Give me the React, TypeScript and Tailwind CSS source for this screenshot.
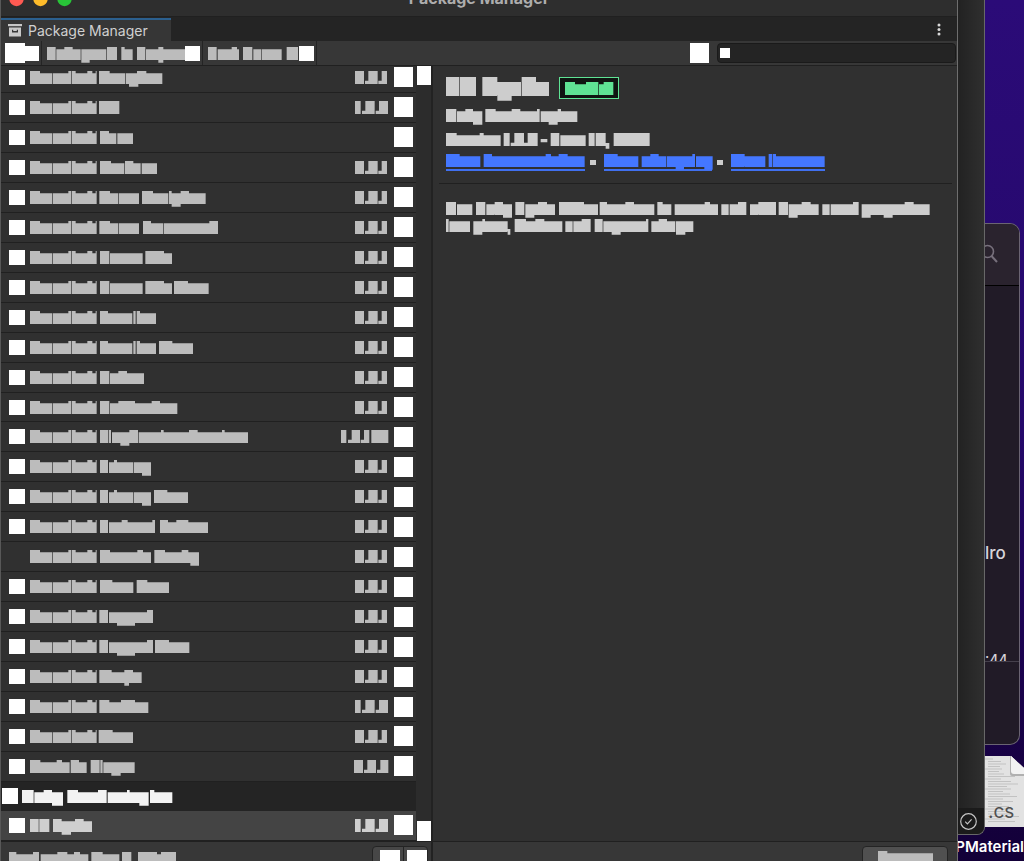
import clsx from "clsx";
import { useState } from "react";

type PackageRow = {
  id: string;
  label: string;
  version: string;
  expandable?: boolean;
};

const PREFIX = "a30x37s2x46a8s2a12x35a15x10a3";
const V_PATCH = "a27_3b10a28_2b10a16_3";
const V_MAJOR = "a17_4b10a28_3b10a27";
const V_LONG = "a16_5b11a25_2b10a16_6a51";
const V_LAST = "a27_3b10a26_3b10a24";

const packages: PackageRow[] = [
  { id: "p1", label: PREFIX + "_7a32x47s2x9d24D4a24x48", version: V_PATCH },
  { id: "p2", label: PREFIX + "_7a61", version: V_MAJOR },
  { id: "p3", label: PREFIX + "_10a27x22s3x47", version: "" },
  { id: "p4", label: PREFIX + "_10a33x40s2a25x22s3x46", version: V_PATCH },
  { id: "p5", label: PREFIX + "_8a32x25s2x60_9a33x46s2a8d27a25x50", version: V_PATCH },
  { id: "p6", label: PREFIX + "_8a32x25s2x60_12a24x37s2x136a26", version: V_PATCH },
  { id: "p7", label: PREFIX + "_10a28s2x98_8a56x24", version: V_PATCH },
  { id: "p8", label: PREFIX + "_10a28s2x98_8a56x24_6a42x62", version: V_PATCH },
  { id: "p9", label: PREFIX + "_10a24x73s3a7s3a10x48", version: V_PATCH },
  { id: "p10", label: PREFIX + "_10a24x73s3a7s3a10x48_9a40x62", version: V_PATCH },
  { id: "p11", label: PREFIX + "_10a28s2x25a26x51", version: V_PATCH },
  { id: "p12", label: PREFIX + "_10a28s2x25a50x50a25x52", version: V_PATCH },
  { id: "p13", label: PREFIX + "_10a24s2a7s3x25d27a26s2x67a8x76a26x73a8x70", version: V_LONG },
  { id: "p14", label: PREFIX + "_10a24s3x15a9x49s2x24d27", version: V_PATCH },
  { id: "p15", label: PREFIX + "_10a24s3x15a9x49s2x24d27_9a40x62", version: V_PATCH },
  { id: "p16", label: PREFIX + "_10a24s3x38a18x74a8_15a24x25a36x59", version: V_PATCH },
  { id: "p17", label: PREFIX + "_10a30x82a17x24_10a32x50a20x6d26", version: V_PATCH, expandable: false },
  { id: "p18", label: PREFIX + "_10a37x63_10a32x65", version: V_PATCH },
  { id: "p19", label: PREFIX + "_8a26s3x24d54x36a18", version: V_PATCH },
  { id: "p20", label: PREFIX + "_8a26s3x24d54x36a18_6a42x61", version: V_PATCH },
  { id: "p21", label: PREFIX + "_8a37x38D14a12x26", version: V_PATCH },
  { id: "p22", label: PREFIX + "_8a30x35a42x40", version: V_MAJOR },
  { id: "p23", label: PREFIX + "_6a42x61", version: V_PATCH },
  { id: "p24", label: "a31x49a16x23s3a25x23_12a27s2a7s2x24d28x42", version: V_LAST },
];

const selectedPackage: PackageRow = {
  id: "sprite",
  label: "a26s2a30_11a26d28x12a26x25",
  version: V_MAJOR,
};

const links = [
  { name: "View documentation", code: "a41x62_10a25x161a16x23a27x51" },
  { name: "View changelog", code: "a41x62_10x26a25x22s2x27d25x25a8s3x25d25" },
  { name: "View licenses", code: "a41x62_10a10s2a10x146" },
];

// Each letter is a block kind followed by its width in thirds of a pixel:
// a = tall, x = low, d = low with a tail, D = tall with a tail, b = dot,
// c = comma, m = dash, s = seam, _ = gap.
function Blocks({ code, big = false }: { code: string; big?: boolean }) {
  const low = big ? 15 : 7;
  const base = big ? 57 : 39;
  const tail = big ? 71 : 47;
  const spans: Record<string, [number, number]> = {
    a: [0, base],
    x: [low, base],
    d: [low, tail],
    D: [0, tail],
    b: [29, base],
    c: [30, tail],
    m: [18, 28],
  };
  let x = 0;
  let path = "";
  for (const [, kind, size] of code.matchAll(/([a-zA-Z_])(\d+)/g)) {
    const width = Number(size);
    const span = spans[kind];
    if (span) {
      path += `M${x} ${span[0]}h${width}V${span[1]}h${-width}z`;
    }
    x += width;
  }
  return (
    <svg
      width={x / 3}
      height={base / 3}
      viewBox={`0 0 ${x} ${base}`}
      className="block shrink-0 overflow-visible fill-current"
      aria-hidden="true"
    >
      <path d={path} />
    </svg>
  );
}

function Row({
  row,
  selected,
  first,
  onSelect,
}: {
  row: PackageRow;
  selected: boolean;
  first?: boolean;
  onSelect: () => void;
}) {
  return (
    <li
      className={clsx(
        "flex min-h-0 border-b border-[#202020]",
        first ? "h-[27px] shrink-0 pb-1" : "flex-1",
        selected ? "bg-[#444444] text-[#cfcfcf]" : "text-[#bcbcbc]"
      )}
    >
      <button
        type="button"
        aria-label={row.id}
        onClick={onSelect}
        className="flex w-full items-center pl-2 pr-[3px]"
      >
        <span
          className={clsx(
            "mr-[5px] h-[15px] w-4 shrink-0",
            row.expandable !== false && "bg-white"
          )}
        />
        <Blocks code={row.label} />
        <span className="ml-auto mr-1.5">
          <Blocks code={row.version} />
        </span>
        <span className="h-5 w-[19px] shrink-0 bg-white" />
      </button>
    </li>
  );
}

function TitleBar() {
  return (
    <div className="relative flex h-4 shrink-0 items-end justify-center overflow-hidden bg-[#2e2e2e]">
      <svg className="absolute left-0 top-0" width="80" height="8" viewBox="0 0 80 8" aria-hidden="true">
        <circle cx="15.5" cy="-1" r="7.2" fill="#ff5a52" />
        <circle cx="39.5" cy="-1" r="7.2" fill="#febb2a" />
        <circle cx="63.5" cy="-1" r="7.2" fill="#28c438" />
      </svg>
      <h1 className="pb-2 text-base font-bold leading-5 text-[#adadad]">
        Package Manager
      </h1>
    </div>
  );
}

function TabStrip() {
  return (
    <div className="flex h-[25px] shrink-0 items-end justify-between border-t border-[#202020] bg-[#242424]">
      <button
        type="button"
        className="flex h-[23px] w-[170px] items-center gap-1.5 border-t-2 border-[#2b5f8e] bg-[#363636] pl-[7px] text-sm leading-5 text-[#d0d0d0]"
      >
        <svg width="14" height="13" viewBox="0 0 14 13" fill="#c8c8c8" aria-hidden="true">
          <path d="M0 0h14v2.2H0z" />
          <path fillRule="evenodd" d="M1 3.4h12V12.4H1zM4 5.8v2.6h6V5.8H8.8v1.2H5.2V5.8z" />
        </svg>
        Package Manager
      </button>
      <button type="button" aria-label="More" className="mr-3 flex h-6 w-3 items-center justify-center">
        <svg width="4" height="13" viewBox="0 0 4 13" fill="#d8d8d8" aria-hidden="true">
          <circle cx="2" cy="1.9" r="1.5" />
          <circle cx="2" cy="6.5" r="1.5" />
          <circle cx="2" cy="11.1" r="1.5" />
        </svg>
      </button>
    </div>
  );
}

function Toolbar() {
  return (
    <div className="flex h-[25px] shrink-0 items-center border-b border-[#202020] bg-[#373737] text-[#bcbcbc]">
      <button type="button" aria-label="Add" className="flex h-full w-[41px] items-center border-r border-[#242424] pl-1">
        <span className="h-5 w-5 bg-white" />
        <span className="h-[15px] w-3.5 bg-white" />
      </button>
      <button type="button" aria-label="Packages" className="flex h-full w-[161px] items-center border-r border-[#242424] pl-[5px]">
        <Blocks code="a26s2x24a25x24s2d25x50s2a30_13a10x24_13a25s2x37D15x66" />
        <span className="h-[15px] w-[15px] bg-white" />
      </button>
      <button type="button" aria-label="Sort" className="flex h-full w-[114px] items-center border-r border-[#242424] pl-[5px]">
        <Blocks code="a26s3x42a16x6_12a28s3x23s2x60_15a34" />
        <span className="ml-px h-[15px] w-[15px] bg-white" />
      </button>
      <button type="button" aria-label="Settings" className="ml-auto mr-2 h-5 w-[19px] bg-white" />
      <label className="mr-px flex h-5 w-[239px] items-center rounded border border-[#1a1a1a] bg-[#242424] pl-0.5">
        <span className="h-2.5 w-2.5 shrink-0 bg-white" />
        <input aria-label="Search" type="text" className="w-full bg-transparent px-1 text-xs outline-none" />
      </label>
    </div>
  );
}

function Details() {
  return (
    <div className="min-h-0 flex-1 pl-1.5 pr-[5px] pt-[11px] text-[#cdcdcd]">
      <div className="border-b border-[#202020] pb-3 pl-[7px]">
        <div className="flex items-start gap-2.5">
          <Blocks big code="a40s2a48_19a45d43x28s2a43x39" />
          <span className="flex h-[22px] w-[60px] items-center justify-center border border-[#5fe394] bg-[#101512] text-[#5fe394]">
            <Blocks code="a30x33a37s2x14a29" />
          </span>
        </div>
        <div className="mt-2.5">
          <Blocks code="a31s2x25a23d28_9a31x48a26x50a8s3x24d27a10x49" />
        </div>
        <div className="mt-[11px]">
          <Blocks code="a32x69a12x51_9a18_3b11a29b11a30_9m20_10a26s3x76_9a18s3a30c11_13a108" />
        </div>
        <div className="mt-2 flex items-start">
          {links.map(({ name, code }, index) => (
            <span key={name} className="flex items-start">
              {index > 0 && <span className="ml-[5px] mr-2 mt-1.5 h-[5px] w-1.5 bg-[#cdcdcd]" />}
              <a
                href="#details"
                aria-label={name}
                className="border-b-2 border-[#4070f0] pb-0.5 text-[#4477ff]"
              >
                <Blocks code={code} />
              </a>
            </span>
          ))}
        </div>
      </div>
      <div className="flex flex-col gap-1 pl-[7px] pt-[18px]">
        <Blocks code="a30s3x46_11a28s3x25a25d27_10a27s3d27x11a27x24_12a75x42_5a22x55a26x61_9a16x26_10x90a16x24_10x22s3x25a25_11x25a53_8a28s2d27x12a27x24_11x22s3x67a17_9d27x39d27x36a27x48" />
        <Blocks code="a8s2x62_10d27a8x68c8_13a34x28a27x54_9x22s2x25a27_12a24s2x25d27x76a7_9x22a25x25s2d28x24" />
      </div>
    </div>
  );
}

function PackageManager() {
  const [selected, setSelected] = useState(selectedPackage.id);

  return (
    <main className="z-10 flex min-w-0 flex-1 flex-col border-l border-r border-l-[#585858] border-r-[#6e6e6e] bg-[#303030]">
      <TitleBar />
      <TabStrip />
      <Toolbar />
      <div className="flex min-h-0 flex-1">
        <section className="flex w-[432px] shrink-0 flex-col border-r-2 border-[#222222]">
          <div className="flex min-h-0 flex-1">
            <ul className="flex min-w-0 flex-1 flex-col">
              {packages.map((row, index) => (
                <Row
                  key={row.id}
                  row={row}
                  first={index === 0}
                  selected={selected === row.id}
                  onSelect={() => setSelected(row.id)}
                />
              ))}
              <li className="flex min-h-0 flex-1 items-center gap-1 bg-[#242424] pl-px text-[#f2f2f2]">
                <span className="h-4 w-4 bg-white" />
                <Blocks code="a35s2x28a25d33_13a32x60a26s3x58a8x29d28s4a13x54" />
              </li>
              <Row
                row={selectedPackage}
                selected={selected === selectedPackage.id}
                onSelect={() => setSelected(selectedPackage.id)}
              />
            </ul>
            <div className="flex w-[15px] shrink-0 flex-col justify-between bg-[#2c2c2c] pl-px">
              <span className="h-[19px] w-3.5 bg-white" />
              <span className="h-5 w-3.5 bg-white" />
            </div>
          </div>
          <div className="flex h-5 shrink-0 items-start overflow-hidden border-t border-[#202020] bg-[#373737] pl-2 text-[#bcbcbc]">
            <span className="pt-2.5">
              <Blocks code="a22x50a18s5x50a30x20a18x25_9a34x50_8a28_20a57x12a45" />
            </span>
            <div className="ml-auto mr-[3px] mt-1 flex h-6 rounded border border-[#242424] bg-[#474747]">
              <button type="button" aria-label="Refresh" className="flex w-[31px] justify-end border-r border-[#242424] pr-[3px] pt-[3px]">
                <span className="h-5 w-5 bg-white" />
              </button>
              <button type="button" aria-label="Refresh options" className="flex w-[23px] justify-end pt-[3px]">
                <span className="h-5 w-5 bg-white" />
              </button>
            </div>
          </div>
        </section>
        <section id="details" className="flex min-w-0 flex-1 flex-col">
          <Details />
          <div className="flex h-5 shrink-0 justify-end overflow-hidden border-t border-[#202020] bg-[#373737] pr-[9px] pt-1">
            <button
              type="button"
              aria-label="Remove"
              className="flex h-6 w-[86px] shrink-0 justify-center rounded border border-[#242424] bg-[#505050] pt-1 text-[#bcbcbc]"
            >
              <Blocks code="a28x137" />
            </button>
          </div>
        </section>
      </div>
    </main>
  );
}

function CodeFileIcon() {
  const lines = Array.from({ length: 26 }, (_, i) => i);
  return (
    <svg width="40" height="71" viewBox="0 0 40 71" className="mt-[11px] block shrink-0" aria-hidden="true">
      <path d="M0 0h26l14 13v58H0z" fill="#e2e2e2" />
      {lines.map((i) => (
        <path
          key={i}
          d={`M${i % 4 === 0 ? 0 : 3} ${3 + i * 2.5}h${i < 7 ? 8 + ((i * 5) % 11) : 14 + ((i * 7) % 18)}`}
          stroke="#b4b4b4"
          strokeWidth="0.7"
        />
      ))}
      <path d="M25 0h1l14 13v7H27q-2 0-2-2z" fill="#b0b0b0" />
      <path d="M26 0l14 13v5H29q-3 0-3-3z" fill="#f2f2f2" />
      <text x="3" y="62" fontSize="19" fontFamily="Inter, sans-serif" fill="#505050">
        .cs
      </text>
    </svg>
  );
}

function Desktop() {
  return (
    <aside className="flex w-[66px] shrink-0 flex-col overflow-hidden">
      <div className="flex min-h-0 flex-1">
        <div className="flex w-[27px] shrink-0 flex-col justify-end overflow-hidden rounded-br-lg border-b border-r border-[#686868] bg-linear-to-r from-[#222222] to-[#2f2f2f]">
          <div className="flex h-[26px] items-center bg-[#1b1b1b] pl-0.5">
            <svg width="17" height="17" viewBox="0 0 17 17" fill="none" stroke="#c4c4c4" strokeWidth="1.2" aria-hidden="true">
              <circle cx="8.5" cy="8.5" r="7.8" />
              <path d="M5.2 8.6l2.2 2.2 4.2-4.4" />
            </svg>
          </div>
        </div>
        <div className="flex min-w-0 flex-1 flex-col pt-[223px]">
          <div className="mr-1 flex h-[522px] shrink-0 flex-col overflow-hidden rounded-r-[10px] border-y border-r border-[#6a6472] bg-[#211b27]">
            <div className="h-[62px] shrink-0 border-b border-black bg-[#2a232e]">
              <svg width="16" height="42" viewBox="0 0 16 42" fill="none" stroke="#77707c" strokeWidth="1.6" aria-hidden="true">
                <circle cx="2.5" cy="27.5" r="6" />
                <path d="M6.5 32l5.5 6" strokeWidth="2" />
              </svg>
            </div>
            <div className="flex h-[376px] shrink-0 flex-col justify-end overflow-hidden border-b border-[#45404c] font-medium leading-5 text-[#d6d4d9]">
              <p className="text-[17px]">lro</p>
              <p className="mt-[87px] h-[11px] text-sm leading-5">:44</p>
            </div>
          </div>
          <CodeFileIcon />
        </div>
      </div>
      <p className="flex h-[26px] shrink-0 justify-end text-[15px] font-semibold leading-6 text-white">
        PMaterial
      </p>
    </aside>
  );
}

export default function App() {
  return (
    <div className="flex h-screen overflow-hidden bg-linear-to-b from-[#2b0b78] via-[#24086a] to-[#130038] font-[Inter,sans-serif]">
      <PackageManager />
      <Desktop />
    </div>
  );
}
